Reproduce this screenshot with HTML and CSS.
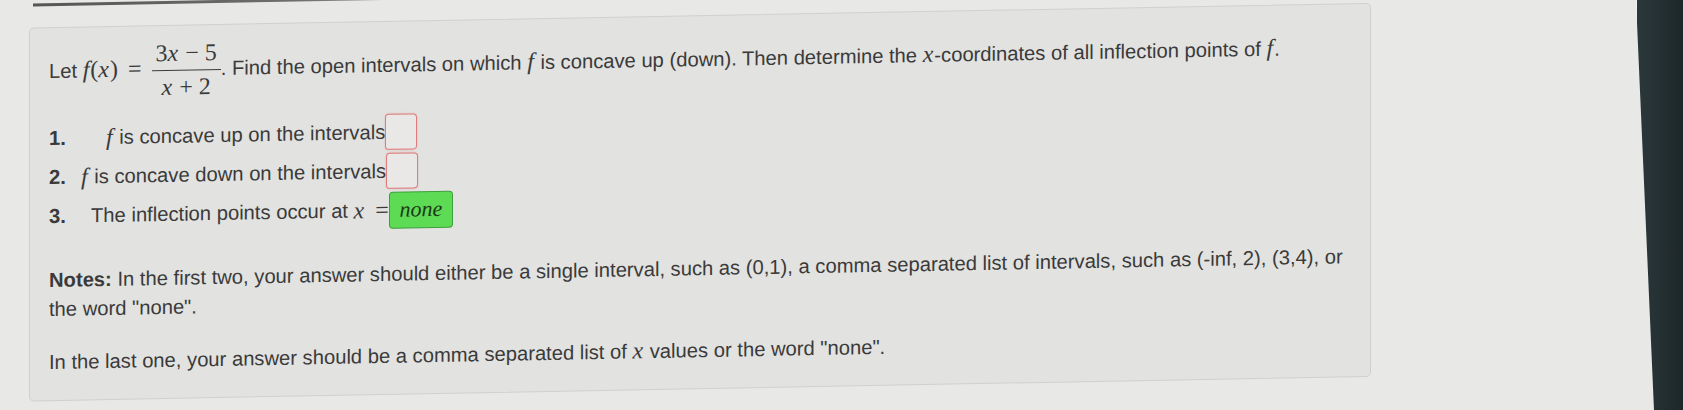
FILE: index.html
```html
<!DOCTYPE html>
<html lang="en">
<head>
    <meta charset="UTF-8">
    <meta name="viewport" content="width=device-width, initial-scale=1.0">
    <title>Concavity - Homework</title>
    <link rel="stylesheet" href="styles.css">
</head>
<body>
    <div class="screen">
        <!-- Tilted page (photo of a monitor) -->
        <div class="page">
            <div class="top-rule"></div>

            <div class="problem">
                <p class="intro">
                    Let <span class="math"><i>f</i>(<i>x</i>)<span class="eq">=</span><span class="frac"><span class="num">3<i>x</i> − 5</span><span class="den"><i>x</i> + 2</span></span></span>. Find the open intervals on which <span class="math"><i>f</i></span> is concave up (down). Then determine the <span class="math"><i>x</i></span>-coordinates of all inflection points of <span class="math"><i>f</i></span>.
                </p>

                <ol class="parts">
                    <li class="part part-1">
                        <span class="num-label">1.</span>
                        <span class="math"><i>f</i></span>&nbsp;is concave up on the intervals<span class="answer answer-empty"></span>
                    </li>
                    <li class="part part-2">
                        <span class="num-label">2.</span>
                        <span class="math"><i>f</i></span>&nbsp;is concave down on the intervals<span class="answer answer-empty"></span>
                    </li>
                    <li class="part part-3">
                        <span class="num-label">3.</span>
                        The inflection points occur at&nbsp;<span class="math"><i>x</i><span class="eq eq-tight">=</span></span><span class="answer answer-correct">none</span>
                    </li>
                </ol>

                <p class="notes">
                    <b>Notes:</b> In the first two, your answer should either be a single interval, such as (0,1), a comma separated list of intervals, such as (-inf, 2), (3,4), or the word "none".
                </p>
                <p class="notes notes-last">
                    In the last one, your answer should be a comma separated list of <span class="math"><i>x</i></span> values or the word "none".
                </p>
            </div>
        </div>

        <div class="bezel"></div>
    </div>
</body>
</html>
```

FILE: styles.css
```css
/* General Styling */
body {
    margin: 0;
    overflow: hidden;
    font-family: 'Liberation Sans', Arial, sans-serif;
    background-color: #e8e8e6;
    color: #3a3a3a;
}

.screen {
    display: flex;
    width: 1683px;
    height: 410px;
    overflow: hidden;
}

/* the photo is taken at a slight angle */
.page {
    flex: 1;
    padding: 0 0 0 29px;
    transform: skewY(-1.05deg);
    transform-origin: 0 0;
}

.top-rule {
    width: 640px;
    height: 3px;
    margin: 4px 0 21px 4px;
    background: linear-gradient(to right, #555, #6d6d6d 40%, rgba(150, 150, 150, 0));
}

.problem {
    width: 1342px;
    height: 374px;
    padding: 12px 12px 0 19px;
    box-sizing: border-box;
    background-color: #e2e2e0;
    border: 1px solid #d0d0ce;
    border-radius: 5px;
    font-size: 20.2px;
}

.problem p {
    margin: 0;
}

/* Math */
.math {
    font-family: 'Liberation Serif', 'DejaVu Serif', serif;
    font-size: 24px;
}

.math i {
    font-style: italic;
    padding-right: 1px;
}

.eq {
    margin: 0 10px;
}

.eq-tight {
    margin-right: 0;
}

.frac {
    display: inline-flex;
    flex-direction: column;
    align-items: center;
    vertical-align: middle;
    line-height: 27px;
}

.frac .num {
    padding: 0 4px 3px;
    border-bottom: 1px solid #3a3a3a;
}

.frac .den {
    padding: 3px 4px 0;
}

.intro {
    line-height: 60px;
}

/* Parts */
.parts {
    list-style: none;
    margin: 16px 0 0;
    padding: 0;
}

.part {
    display: flex;
    align-items: center;
    height: 39px;
}

.num-label {
    font-weight: bold;
    width: 32px;
}

.part-1 .num-label {
    width: 57px;
}

.part-3 .num-label {
    width: 42px;
}

.answer {
    display: inline-flex;
    align-items: center;
    justify-content: center;
    box-sizing: border-box;
    height: 36px;
    border-radius: 4px;
}

.answer-empty {
    width: 32px;
    border: 1px solid #df7c7c;
    background-color: #e9e8e6;
    box-shadow: 0 0 2px rgba(220, 90, 90, 0.35);
}

.answer-correct {
    width: 64px;
    height: 37px;
    border: 1px solid #3c9f3a;
    background-color: #5edb55;
    color: #1c3a18;
    font-family: 'Liberation Serif', 'DejaVu Serif', serif;
    font-style: italic;
    font-size: 22px;
}

/* Notes */
.notes {
    line-height: 29px;
}

.problem .notes {
    margin-top: 30px;
}

.problem .notes-last {
    margin-top: 23px;
}

.bezel {
    width: 46px;
    background: linear-gradient(to right, #2b383b, #1d2729);
    border-left: 1px solid #f4f4f2;
    clip-path: polygon(0 0, 100% 0, 100% 100%, 18px 100%);
}
```
